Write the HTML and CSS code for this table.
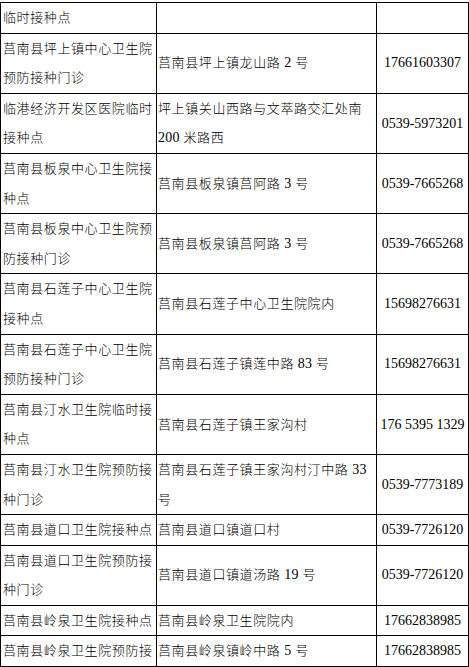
FILE: index.html
```html
<!DOCTYPE html>
<html lang="zh-CN">
<head>
<meta charset="utf-8">
<title>接种点</title>
<link rel="stylesheet" href="styles.css">
</head>
<body>
<table class="sites">
  <colgroup>
    <col class="c-name">
    <col class="c-addr">
    <col class="c-tel">
  </colgroup>
  <tbody>
    <tr><td class="name">临时接种点</td><td class="addr"></td><td class="tel"></td></tr>
    <tr><td class="name">莒南县坪上镇中心卫生院<br>预防接种门诊</td><td class="addr">莒南县坪上镇龙山路 <span class="num">2</span> 号</td><td class="tel">17661603307</td></tr>
    <tr><td class="name">临港经济开发区医院临时<br>接种点</td><td class="addr">坪上镇关山西路与文萃路交汇处南<br><span class="num">200</span> 米路西</td><td class="tel">0539-5973201</td></tr>
    <tr><td class="name">莒南县板泉中心卫生院接<br>种点</td><td class="addr">莒南县板泉镇莒阿路 <span class="num">3</span> 号</td><td class="tel">0539-7665268</td></tr>
    <tr><td class="name">莒南县板泉中心卫生院预<br>防接种门诊</td><td class="addr">莒南县板泉镇莒阿路 <span class="num">3</span> 号</td><td class="tel">0539-7665268</td></tr>
    <tr><td class="name">莒南县石莲子中心卫生院<br>接种点</td><td class="addr">莒南县石莲子中心卫生院院内</td><td class="tel">15698276631</td></tr>
    <tr><td class="name">莒南县石莲子中心卫生院<br>预防接种门诊</td><td class="addr">莒南县石莲子镇莲中路 <span class="num">83</span> 号</td><td class="tel">15698276631</td></tr>
    <tr><td class="name">莒南县汀水卫生院临时接<br>种点</td><td class="addr">莒南县石莲子镇王家沟村</td><td class="tel">176 5395 1329</td></tr>
    <tr><td class="name">莒南县汀水卫生院预防接<br>种门诊</td><td class="addr">莒南县石莲子镇王家沟村汀中路 <span class="num">33</span><br>号</td><td class="tel">0539-7773189</td></tr>
    <tr><td class="name">莒南县道口卫生院接种点</td><td class="addr">莒南县道口镇道口村</td><td class="tel">0539-7726120</td></tr>
    <tr><td class="name">莒南县道口卫生院预防接<br>种门诊</td><td class="addr">莒南县道口镇道汤路 <span class="num">19</span> 号</td><td class="tel">0539-7726120</td></tr>
    <tr><td class="name">莒南县岭泉卫生院接种点</td><td class="addr">莒南县岭泉卫生院院内</td><td class="tel">17662838985</td></tr>
    <tr><td class="name">莒南县岭泉卫生院预防接</td><td class="addr">莒南县岭泉镇岭中路 <span class="num">5</span> 号</td><td class="tel">17662838985</td></tr>
  </tbody>
</table>
</body>
</html>
```
FILE: styles.css
```css
html, body {
  margin: 0;
  padding: 0;
  background: #ffffff;
}

body {
  padding-top: 2px;
  overflow: hidden;
}

.sites {
  border-collapse: collapse;
  table-layout: fixed;
  width: 468px;
  color: #000000;
  font-family: "Liberation Serif", "Noto Sans CJK SC", serif;
}

.c-name { width: 156px; }
.c-addr { width: 220px; }
.c-tel { width: 92px; }

.sites td {
  border: 1px solid #000000;
  padding: 0 1px;
  vertical-align: middle;
  white-space: nowrap;
  overflow: hidden;
  line-height: 29.6px;
  font-size: 13px;
  font-weight: 300;
  letter-spacing: 0.6px;
}

.sites td.name {
  padding-left: 2px;
}

.sites .num {
  font-size: 14px;
  font-weight: 400;
  letter-spacing: 0.2px;
}

.sites td.tel {
  text-align: center;
  font-size: 14px;
  font-weight: 400;
  letter-spacing: 0;
}
```
